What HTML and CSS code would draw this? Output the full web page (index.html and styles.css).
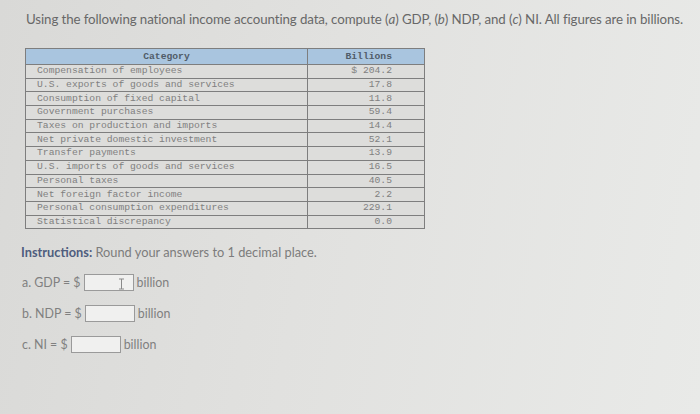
FILE: index.html
```html
<!DOCTYPE html>
<html>
<head>
<meta charset="utf-8">
<link rel="stylesheet" href="styles.css">
</head>
<body>
<div class="page">
  <p class="question">Using the following national income accounting data, compute (<i>a</i>) GDP, (<i>b</i>) NDP, and (<i>c</i>) NI. All figures are in billions.</p>
  <table class="data">
    <thead>
      <tr><th class="cat">Category</th><th class="num">Billions</th></tr>
    </thead>
    <tbody>
      <tr><td>Compensation of employees</td><td class="num">$ 204.2</td></tr>
      <tr><td>U.S. exports of goods and services</td><td class="num">17.8</td></tr>
      <tr><td>Consumption of fixed capital</td><td class="num">11.8</td></tr>
      <tr><td>Government purchases</td><td class="num">59.4</td></tr>
      <tr><td>Taxes on production and imports</td><td class="num">14.4</td></tr>
      <tr><td>Net private domestic investment</td><td class="num">52.1</td></tr>
      <tr><td>Transfer payments</td><td class="num">13.9</td></tr>
      <tr><td>U.S. imports of goods and services</td><td class="num">16.5</td></tr>
      <tr><td>Personal taxes</td><td class="num">40.5</td></tr>
      <tr><td>Net foreign factor income</td><td class="num">2.2</td></tr>
      <tr><td>Personal consumption expenditures</td><td class="num">229.1</td></tr>
      <tr><td>Statistical discrepancy</td><td class="num">0.0</td></tr>
    </tbody>
  </table>
  <p class="instr"><b>Instructions:</b> Round your answers to 1 decimal place.</p>
  <div class="answers">
    <div class="ans">a. GDP = $ <span class="box"><svg class="cursor" width="7" height="12" viewBox="0 0 7 12"><path d="M1 1h5M1 11h5M3.5 1v10" stroke="#8a8a8a" stroke-width="1" fill="none"/></svg></span> billion</div>
    <div class="ans">b. NDP = $ <span class="box"></span> billion</div>
    <div class="ans">c. NI = $ <span class="box"></span> billion</div>
  </div>
</div>
</body>
</html>
```

FILE: styles.css
```css
html, body {
  margin: 0;
  height: 100%;
}
body {
  background: linear-gradient(100deg, #d9d9d7 0%, #e1e1df 45%, #e9eae8 100%);
  font-family: Lato, "Open Sans", sans-serif;
  color: #747474;
}
.page {
  padding: 11px 0 0 22px;
}
.question {
  margin: 0 0 0 4px;
  font-size: 13.3px;
  color: #686868;
  letter-spacing: -0.1px;
}
.data {
  margin: 21px 0 0 3px;
  border-collapse: collapse;
  width: 400px;
  font-family: "Liberation Mono", monospace;
  font-size: 9.7px;
  color: #808080;
  border: 1px solid #7e7e7e;
}
.data th {
  background: #a9c5df;
  color: #505c68;
  font-weight: bold;
  height: 15px;
  padding: 0;
  border: 1px solid #7e7e7e;
}
.data td {
  height: 12.7px;
  padding: 0 0 0 11px;
  border: 1px solid #7e7e7e;
  background: #dddddb;
  line-height: 12px;
}
.data .cat {
  width: 281px;
  text-align: center;
}
.data .num {
  text-align: right;
  padding: 0 32px 0 0;
}
.instr {
  margin: 15px 0 0 -1px;
  font-size: 12.8px;
  color: #7c7c7c;
}
.instr b {
  color: #4f5d7e;
}
.answers {
  margin-top: 13px;
  display: flex;
  flex-direction: column;
  gap: 13px;
}
.ans {
  font-size: 12.4px;
  color: #808080;
  display: flex;
  align-items: center;
  gap: 3px;
  height: 18px;
}
.box {
  position: relative;
  display: inline-block;
  width: 48px;
  height: 15px;
  border: 1px solid #9a9a9a;
  background: #f0f0ef;
}
.cursor {
  position: absolute;
  left: 33px;
  top: 3px;
}
```
